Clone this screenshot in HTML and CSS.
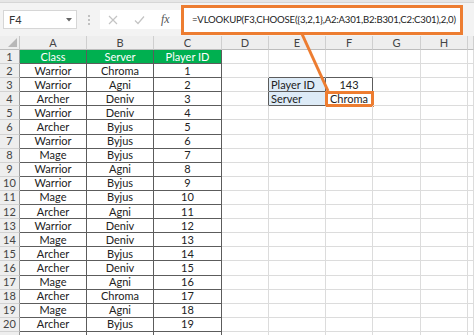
FILE: index.html
```html
<!DOCTYPE html>
<html>
<head>
<meta charset="utf-8">
<link rel="stylesheet" href="styles.css">
</head>
<body>
<div class="page">
  <div class="ribbon-edge"></div>
  <div class="toolbar">
    <div class="namebox"><span>F4</span><svg class="arrow" width="6" height="4" viewBox="0 0 6 4"><path d="M0 0H6L3 3.5Z" fill="#666"/></svg></div>
    <div class="sep"><i></i><i></i><i></i></div>
    <div class="fxbox">
      <svg class="ico" width="10" height="10" viewBox="0 0 10 10"><path d="M1 1L9 9M9 1L1 9" stroke="#c4c4c4" stroke-width="1.2" fill="none"/></svg>
      <svg class="ico" width="11" height="10" viewBox="0 0 11 10"><path d="M1 5.5L4 8.5L10 1.5" stroke="#c4c4c4" stroke-width="1.2" fill="none"/></svg>
      <span class="fx">fx</span>
    </div>
    <div class="formula">=VLOOKUP(F3,CHOOSE({3,2,1},A2:A301,B2:B301,C2:C301),2,0)</div>
  </div>
  <div class="sheet">
    <div class="corner"><svg width="9" height="9" viewBox="0 0 9 9"><path d="M9 0V9H0Z" fill="#b8b8b8"/></svg></div>
    <div class="ch">A</div><div class="ch">B</div><div class="ch">C</div><div class="ch">D</div><div class="ch">E</div><div class="ch">F</div><div class="ch">G</div><div class="ch">H</div><div class="ch"></div>

    <div class="rh">1</div><div class="c t g">Class</div><div class="c t g">Server</div><div class="c t g">Player ID</div><div class="c"></div><div class="c"></div><div class="c"></div><div class="c"></div><div class="c"></div><div class="c"></div>
    <div class="rh">2</div><div class="c t">Warrior</div><div class="c t">Chroma</div><div class="c t">1</div><div class="c"></div><div class="c bb"></div><div class="c bb"></div><div class="c"></div><div class="c"></div><div class="c"></div>
    <div class="rh">3</div><div class="c t">Warrior</div><div class="c t">Agni</div><div class="c t">2</div><div class="c br"></div><div class="c t lb left">Player ID</div><div class="c t">143</div><div class="c"></div><div class="c"></div><div class="c"></div>
    <div class="rh">4</div><div class="c t">Archer</div><div class="c t">Deniv</div><div class="c t">3</div><div class="c br"></div><div class="c t lb left">Server</div><div class="c t hl">Chroma</div><div class="c"></div><div class="c"></div><div class="c"></div>
    <div class="rh">5</div><div class="c t">Warrior</div><div class="c t">Deniv</div><div class="c t">4</div><div class="c"></div><div class="c"></div><div class="c"></div><div class="c"></div><div class="c"></div><div class="c"></div>
    <div class="rh">6</div><div class="c t">Archer</div><div class="c t">Byjus</div><div class="c t">5</div><div class="c"></div><div class="c"></div><div class="c"></div><div class="c"></div><div class="c"></div><div class="c"></div>
    <div class="rh">7</div><div class="c t">Warrior</div><div class="c t">Byjus</div><div class="c t">6</div><div class="c"></div><div class="c"></div><div class="c"></div><div class="c"></div><div class="c"></div><div class="c"></div>
    <div class="rh">8</div><div class="c t">Mage</div><div class="c t">Byjus</div><div class="c t">7</div><div class="c"></div><div class="c"></div><div class="c"></div><div class="c"></div><div class="c"></div><div class="c"></div>
    <div class="rh">9</div><div class="c t">Warrior</div><div class="c t">Agni</div><div class="c t">8</div><div class="c"></div><div class="c"></div><div class="c"></div><div class="c"></div><div class="c"></div><div class="c"></div>
    <div class="rh">10</div><div class="c t">Warrior</div><div class="c t">Byjus</div><div class="c t">9</div><div class="c"></div><div class="c"></div><div class="c"></div><div class="c"></div><div class="c"></div><div class="c"></div>
    <div class="rh">11</div><div class="c t">Mage</div><div class="c t">Byjus</div><div class="c t">10</div><div class="c"></div><div class="c"></div><div class="c"></div><div class="c"></div><div class="c"></div><div class="c"></div>
    <div class="rh">12</div><div class="c t">Archer</div><div class="c t">Agni</div><div class="c t">11</div><div class="c"></div><div class="c"></div><div class="c"></div><div class="c"></div><div class="c"></div><div class="c"></div>
    <div class="rh">13</div><div class="c t">Warrior</div><div class="c t">Deniv</div><div class="c t">12</div><div class="c"></div><div class="c"></div><div class="c"></div><div class="c"></div><div class="c"></div><div class="c"></div>
    <div class="rh">14</div><div class="c t">Mage</div><div class="c t">Deniv</div><div class="c t">13</div><div class="c"></div><div class="c"></div><div class="c"></div><div class="c"></div><div class="c"></div><div class="c"></div>
    <div class="rh">15</div><div class="c t">Archer</div><div class="c t">Byjus</div><div class="c t">14</div><div class="c"></div><div class="c"></div><div class="c"></div><div class="c"></div><div class="c"></div><div class="c"></div>
    <div class="rh">16</div><div class="c t">Archer</div><div class="c t">Deniv</div><div class="c t">15</div><div class="c"></div><div class="c"></div><div class="c"></div><div class="c"></div><div class="c"></div><div class="c"></div>
    <div class="rh">17</div><div class="c t">Mage</div><div class="c t">Agni</div><div class="c t">16</div><div class="c"></div><div class="c"></div><div class="c"></div><div class="c"></div><div class="c"></div><div class="c"></div>
    <div class="rh">18</div><div class="c t">Archer</div><div class="c t">Chroma</div><div class="c t">17</div><div class="c"></div><div class="c"></div><div class="c"></div><div class="c"></div><div class="c"></div><div class="c"></div>
    <div class="rh">19</div><div class="c t">Mage</div><div class="c t">Agni</div><div class="c t">18</div><div class="c"></div><div class="c"></div><div class="c"></div><div class="c"></div><div class="c"></div><div class="c"></div>
    <div class="rh">20</div><div class="c t">Archer</div><div class="c t">Byjus</div><div class="c t">19</div><div class="c"></div><div class="c"></div><div class="c"></div><div class="c"></div><div class="c"></div><div class="c"></div>
    <div class="rh"></div><div class="c t"></div><div class="c t"></div><div class="c t"></div><div class="c"></div><div class="c"></div><div class="c"></div><div class="c"></div><div class="c"></div><div class="c"></div>
  </div>
  <svg class="callout" width="474" height="335" viewBox="0 0 474 335"><line x1="302" y1="34" x2="328" y2="91" stroke="#ed7d31" stroke-width="3"/></svg>
</div>
</body>
</html>
```
FILE: styles.css
```css
* { box-sizing: border-box; }
html, body { margin: 0; padding: 0; }
body { background: #fff; font-family: Lato, "Open Sans", sans-serif; color: #222; }
.page { position: relative; width: 474px; height: 335px; overflow: hidden; }
.ribbon-edge { height: 3px; background: #e6e6e6; border-bottom: 1px solid #d6d6d6; }
.toolbar { height: 33px; background: #f3f3f3; display: flex; align-items: center; }
.namebox { margin-left: 3px; width: 74px; height: 19px; background: #fff; border: 1px solid #d6d6d6; display: flex; align-items: center; justify-content: space-between; padding: 0 4px 0 5px; font-size: 11px; color: #333; }
.sep { width: 23px; display: flex; flex-direction: column; align-items: center; gap: 2px; }
.sep i { display: block; width: 2px; height: 2px; background: #b0b0b0; border-radius: 1px; }
.fxbox { width: 81px; height: 19px; background: #fff; display: flex; align-items: center; padding-left: 8px; gap: 16px; }
.fx { font-family: "Liberation Serif", serif; font-style: italic; font-size: 12px; color: #555; }
.formula { width: 282px; height: 30px; border: 3px solid #ed7d31; background: #fff; display: flex; align-items: center; padding-left: 8px; font-family: Lato, sans-serif; font-size: 9.6px; color: #222; white-space: nowrap; letter-spacing: -0.2px; }
.sheet { display: grid; grid-template-columns: 20px 67px 67px 68px 47px 57px 47px 48px 47px 1fr; grid-template-rows: 14px; grid-auto-rows: 14.1px; font-size: 11px; }
.sheet > div { display: flex; align-items: center; justify-content: center; white-space: nowrap; line-height: 12px; }
.corner { background: #eeeeee; border-right: 1px solid #c8c8c8; border-bottom: 1px solid #bdbdbd; justify-content: flex-end !important; align-items: flex-end !important; padding: 0 2px 2px 0; }
.ch { background: #eeeeee; border-right: 1px solid #cfcfcf; border-bottom: 1px solid #bdbdbd; color: #444; }
.rh { background: #eeeeee; border-right: 1px solid #9c9c9c; border-bottom: 1px solid #d2d2d2; color: #444; }
.c { border-right: 1px solid #dcdcdc; border-bottom: 1px solid #dcdcdc; color: #222; }
.c.t { border-right-color: #5c5c5c; border-bottom-color: #5c5c5c; }
.c.bb { border-bottom-color: #5c5c5c; }
.c.br { border-right-color: #5c5c5c; }
.g { background: #00b050; color: #fff; }
.lb { background: #ddebf7; }
.left { justify-content: flex-start !important; padding-left: 2px; }
.hl { outline: 3px solid #ed7d31; outline-offset: -2px; }
.callout { position: absolute; left: 0; top: 0; pointer-events: none; }
```
